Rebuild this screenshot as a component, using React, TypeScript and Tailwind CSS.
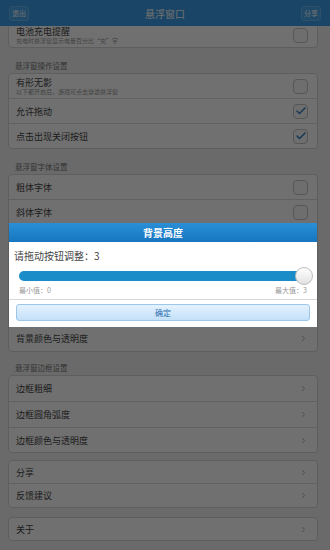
import { ChevronRight, Check } from 'lucide-react';

const font = { fontFamily: '"Noto Sans CJK SC", "Noto Sans", sans-serif' };

function CheckBox({ checked }: { checked?: boolean }) {
    return (
        <div className="flex h-[15px] w-[15px] items-center justify-center rounded-[4px] border border-[#c4c4c4] bg-[#fbfbfb]">
            {checked && <Check className="h-[12px] w-[12px] text-[#2f7fc1]" strokeWidth={3} />}
        </div>
    );
}

function Row({ title, sub, checkbox, checked, h = 'h-[25px]', last }: { title: string; sub?: string; checkbox?: boolean; checked?: boolean; h?: string; last?: boolean }) {
    return (
        <div className={`flex items-center justify-between pl-[7px] pr-[9px] ${h} ${last ? '' : 'border-b border-[#dcdcdc]'}`}>
            <div className="flex flex-col leading-none">
                <span className="text-[9px] text-[#444]">{title}</span>
                {sub && <span className="mt-[2px] text-[6px] text-[#999]">{sub}</span>}
            </div>
            {checkbox ? <CheckBox checked={checked} /> : <ChevronRight className="h-[9px] w-[9px] text-[#aaa]" strokeWidth={2.5} />}
        </div>
    );
}

function Card({ children, className = '' }: { children: React.ReactNode; className?: string }) {
    return <div className={`ml-[8px] mr-[12px] overflow-hidden rounded-[4px] border border-[#d6d6d6] bg-white ${className}`}>{children}</div>;
}

function Label({ text, h = 'h-[25px]' }: { text: string; h?: string }) {
    return <div className={`ml-[15px] flex items-end pb-[4px] text-[7.5px] leading-none text-[#777] ${h}`}>{text}</div>;
}

export default function App() {
    return (
        <div className="relative h-[550px] w-[330px] overflow-hidden bg-[#f2f2f2]" style={font}>
            {/* header */}
            <div className="relative z-10 flex h-[26px] items-center justify-between bg-[#3c9ee8] px-[9px]">
                <div className="rounded-[3px] border border-[#6ab6ee] bg-[#4aa8ee] px-[2px] text-[7px] leading-[13px] text-white">退出</div>
                <span className="text-[10px] text-white">悬浮窗口</span>
                <div className="rounded-[3px] border border-[#6ab6ee] bg-[#4aa8ee] px-[2px] text-[7px] leading-[13px] text-white">分享</div>
            </div>

            <div className="-mt-[7px]">
                <Card>
                    <Row title="电池充电提醒" sub="充电时悬浮窗显示电量百分比“充”字" checkbox h="h-[27px] pt-[4px]" last />
                </Card>

                <Label text="悬浮窗操作设置" />
                <Card>
                    <Row title="有形无影" sub="以下都开启后，游戏可点击穿透悬浮窗" checkbox />
                    <Row title="允许拖动" checkbox checked />
                    <Row title="点击出现关闭按钮" checkbox checked h="h-[24px]" last />
                </Card>

                <Label text="悬浮窗字体设置" />
                <Card>
                    <Row title="粗体字体" checkbox />
                    <Row title="斜体字体" checkbox />
                    <Row title="字体大小" />
                    <Row title="字体颜色" />
                    <Row title="背景宽度" />
                    <Row title="背景高度" />
                    <Row title="背景颜色与透明度" h="h-[26px]" last />
                </Card>

                <Label text="悬浮窗边框设置" h="h-[23px]" />
                <Card>
                    <Row title="边框粗细" h="h-[26px]" />
                    <Row title="边框圆角弧度" h="h-[26px]" />
                    <Row title="边框颜色与透明度" h="h-[24px]" last />
                </Card>

                <Card className="mt-[7px]">
                    <Row title="分享" h="h-[23px]" />
                    <Row title="反馈建议" h="h-[23px]" last />
                </Card>

                <Card className="mt-[9px]">
                    <Row title="关于" h="h-[22px]" last />
                </Card>
            </div>

            {/* overlay */}
            <div className="absolute inset-0 z-20 bg-black/[0.56]" />

            {/* dialog */}
            <div className="absolute inset-0 z-30 flex items-center justify-center pl-[2px] pr-[6px]">
                <div className="w-[308px] bg-white">
                    <div className="flex h-[19px] items-center justify-center bg-gradient-to-b from-[#2a8fd8] to-[#1676c0] text-[10px] font-bold text-white">背景高度</div>
                    <div className="px-[5px] pb-[6px]">
                        <div className="mt-[7px] text-[10px] leading-[13px] text-[#444]">请拖动按钮调整：3</div>
                        <div className="relative ml-[5px] mr-[8px] mt-[5px] flex h-[18px] items-center">
                            <div className="h-[10px] w-full rounded-full bg-[#1a8cc8]" />
                            <div className="absolute right-[-9px] h-[18px] w-[18px] rounded-full border border-[#bdbdbd] bg-gradient-to-b from-white to-[#e2e2e2]" />
                        </div>
                        <div className="mx-[5px] flex justify-between text-[7px] leading-[10px] text-[#999]">
                            <span>最小值：0</span>
                            <span>最大值：3</span>
                        </div>
                        <div className="-mx-[5px] mt-[4px] border-t border-[#d8d8d8]" />
                        <div className="mx-[2px] mt-[4px] flex h-[17px] items-center justify-center rounded-[3px] border border-[#9cc6ea] bg-gradient-to-b from-[#e4f2fe] to-[#c4e0f8] text-[8px] text-[#2a6cb0]">确定</div>
                    </div>
                </div>
            </div>
        </div>
    );
}
